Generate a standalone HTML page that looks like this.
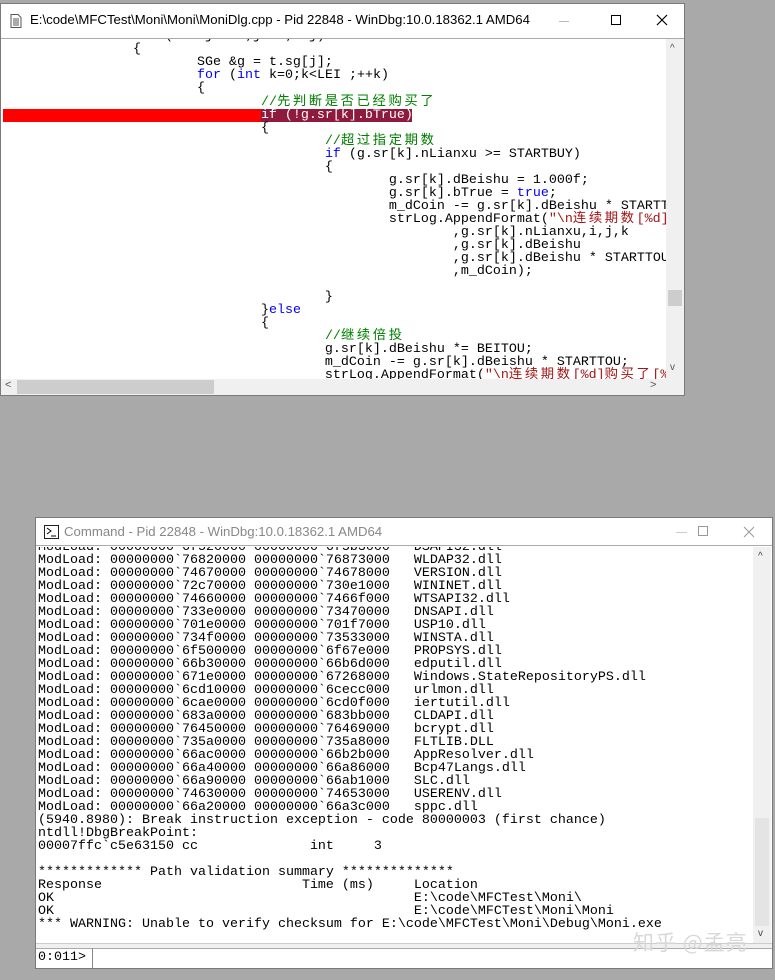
<!DOCTYPE html>
<html><head><meta charset="utf-8"><style>
*{margin:0;padding:0;box-sizing:border-box}
body{width:775px;height:980px;background:#a9a9a9;position:relative;overflow:hidden;font-family:"Liberation Sans",sans-serif}
.win{position:absolute;background:#fff;border:1px solid #7a7a7a}
.tb{position:absolute;left:0;right:0;top:0;height:36px;background:#fff;font-size:13.2px;color:#000;line-height:36px}
.mono{font-family:"Liberation Mono","Noto Sans CJK SC",monospace;font-size:13.33px;line-height:13px;white-space:pre;position:absolute}
.l{position:absolute;left:0;white-space:pre;height:13px}
.b{color:#0000ff}.g{color:#008000}.r{color:#a31515}
.c{letter-spacing:2.6px}
</style></head><body>

<div class="win" style="left:0;top:3px;width:685px;height:393px;">
 <div class="tb" style="height:34px;line-height:32px;">
  <svg style="position:absolute;left:9px;top:10px" width="12" height="14"><path d="M1 .5h7l3 3v10H1z" fill="#fff" stroke="#555"/><path d="M3 5h6M3 7h6M3 9h6M3 11h6" stroke="#555"/></svg>
  <span style="position:absolute;left:29px;">E:\code\MFCTest\Moni\Moni\MoniDlg.cpp - Pid 22848 - WinDbg:10.0.18362.1 AMD64</span>
  <div style="position:absolute;left:558px;top:17px;width:10px;height:1px;background:#bbb"></div>
  <div style="position:absolute;left:610px;top:11px;width:10px;height:10px;border:1px solid #000"></div>
  <svg style="position:absolute;left:655px;top:10px" width="12" height="12"><path d="M1 1l10 10M11 1L1 11" stroke="#000" stroke-width="1.2"/></svg>
 </div>
 <div style="position:absolute;left:0;top:34px;width:683px;height:341px;overflow:hidden;border-top:1px solid #aaa">
  <div style="position:absolute;left:2px;top:70px;width:258px;height:13px;background:#ff0000"></div>
  <div style="position:absolute;left:260px;top:70px;width:151px;height:13px;background:#8e1b3d"></div>
  <div class="mono" style="left:4px;top:-9px;width:662px;height:352px;overflow:hidden">
<div class="l" style="top:0">                <span class="b">for</span> (<span class="b">int</span> j = 0;j&lt;GE;++j)</div>
<div class="l" style="top:13px">                {</div>
<div class="l" style="top:26px">                        SGe &amp;g = t.sg[j];</div>
<div class="l" style="top:39px">                        <span class="b">for</span> (<span class="b">int</span> k=0;k&lt;LEI ;++k)</div>
<div class="l" style="top:52px">                        {</div>
<div class="l" style="top:66px">                                <span class="g">//<span class="c">先判断是否已经购买了</span></span></div>
<div class="l" style="top:79px;color:#fff">                                if (!g.sr[k].bTrue)</div>
<div class="l" style="top:92px">                                {</div>
<div class="l" style="top:105px">                                        <span class="g">//<span class="c">超过指定期数</span></span></div>
<div class="l" style="top:118px">                                        <span class="b">if</span> (g.sr[k].nLianxu &gt;= STARTBUY)</div>
<div class="l" style="top:131px">                                        {</div>
<div class="l" style="top:144px">                                                g.sr[k].dBeishu = 1.000f;</div>
<div class="l" style="top:157px">                                                g.sr[k].bTrue = <span class="b">true</span>;</div>
<div class="l" style="top:170px">                                                m_dCoin -= g.sr[k].dBeishu * STARTTOU;</div>
<div class="l" style="top:183px">                                                strLog.AppendFormat(<span class="r">"\n<span class="c">连续期数</span>[%d]<span class="c">购买了</span>[%d]</span></div>
<div class="l" style="top:196px">                                                        ,g.sr[k].nLianxu,i,j,k</div>
<div class="l" style="top:209px">                                                        ,g.sr[k].dBeishu</div>
<div class="l" style="top:222px">                                                        ,g.sr[k].dBeishu * STARTTOU</div>
<div class="l" style="top:235px">                                                        ,m_dCoin);</div>
<div class="l" style="top:261px">                                        }</div>
<div class="l" style="top:274px">                                }<span class="b">else</span></div>
<div class="l" style="top:287px">                                {</div>
<div class="l" style="top:300px">                                        <span class="g">//<span class="c">继续倍投</span></span></div>
<div class="l" style="top:313px">                                        g.sr[k].dBeishu *= BEITOU;</div>
<div class="l" style="top:326px">                                        m_dCoin -= g.sr[k].dBeishu * STARTTOU;</div>
<div class="l" style="top:339px">                                        strLog.AppendFormat(<span class="r">"\n<span class="c">连续期数</span>[%d]<span class="c">购买了</span>[%d]</span></div>
  </div>
  <div style="position:absolute;left:665px;top:0;width:18px;height:341px;background:#f0f0f0"></div>
  <div style="position:absolute;left:667px;top:251px;width:14px;height:16px;background:#cdcdcd"></div>
  <div style="position:absolute;left:669px;top:4px;font-size:10px;color:#555">^</div>
  <div style="position:absolute;left:669px;top:323px;font-size:10px;color:#555">v</div>
 </div>
 <div style="position:absolute;left:0;top:375px;width:683px;height:16px;background:#f0f0f0">
  <div style="position:absolute;left:16px;top:1px;width:197px;height:14px;background:#cdcdcd"></div>
  <div style="position:absolute;left:4px;top:0;font-size:11px;color:#555">&lt;</div>
  <div style="position:absolute;left:649px;top:0;font-size:11px;color:#555">&gt;</div>
 </div>
</div>

<div class="win" style="left:35px;top:517px;width:738px;height:452px;">
 <div class="tb" style="height:28px;line-height:28px;border-bottom:1px solid #aaa">
  <svg style="position:absolute;left:8px;top:7px" width="15" height="14"><rect x=".5" y=".5" width="14" height="13" fill="#fff" stroke="#222"/><path d="M3 3l4 3-4 3M7 11h5" stroke="#000" fill="none"/></svg>
  <span style="position:absolute;left:28px;color:#888">Command - Pid 22848 - WinDbg:10.0.18362.1 AMD64</span>
  <div style="position:absolute;left:640px;top:14px;width:11px;height:1px;background:#ccc"></div>
  <div style="position:absolute;left:662px;top:8px;width:10px;height:10px;border:1px solid #999"></div>
  <svg style="position:absolute;left:707px;top:8px" width="12" height="12"><path d="M1 1l10 10M11 1L1 11" stroke="#999"/></svg>
 </div>
 <div class="mono" style="left:2px;top:29px;width:715px;height:395px;overflow:hidden">
<div class="l" style="top:-6px">ModLoad: 00000000`6f520000 00000000`6f5b3000   DSAPI32.dll</div>
<div class="l" style="top:7px">ModLoad: 00000000`76820000 00000000`76873000   WLDAP32.dll</div>
<div class="l" style="top:20px">ModLoad: 00000000`74670000 00000000`74678000   VERSION.dll</div>
<div class="l" style="top:33px">ModLoad: 00000000`72c70000 00000000`730e1000   WININET.dll</div>
<div class="l" style="top:46px">ModLoad: 00000000`74660000 00000000`7466f000   WTSAPI32.dll</div>
<div class="l" style="top:59px">ModLoad: 00000000`733e0000 00000000`73470000   DNSAPI.dll</div>
<div class="l" style="top:72px">ModLoad: 00000000`701e0000 00000000`701f7000   USP10.dll</div>
<div class="l" style="top:85px">ModLoad: 00000000`734f0000 00000000`73533000   WINSTA.dll</div>
<div class="l" style="top:98px">ModLoad: 00000000`6f500000 00000000`6f67e000   PROPSYS.dll</div>
<div class="l" style="top:111px">ModLoad: 00000000`66b30000 00000000`66b6d000   edputil.dll</div>
<div class="l" style="top:124px">ModLoad: 00000000`671e0000 00000000`67268000   Windows.StateRepositoryPS.dll</div>
<div class="l" style="top:137px">ModLoad: 00000000`6cd10000 00000000`6cecc000   urlmon.dll</div>
<div class="l" style="top:150px">ModLoad: 00000000`6cae0000 00000000`6cd0f000   iertutil.dll</div>
<div class="l" style="top:163px">ModLoad: 00000000`683a0000 00000000`683bb000   CLDAPI.dll</div>
<div class="l" style="top:176px">ModLoad: 00000000`76450000 00000000`76469000   bcrypt.dll</div>
<div class="l" style="top:189px">ModLoad: 00000000`735a0000 00000000`735a8000   FLTLIB.DLL</div>
<div class="l" style="top:202px">ModLoad: 00000000`66ac0000 00000000`66b2b000   AppResolver.dll</div>
<div class="l" style="top:215px">ModLoad: 00000000`66a40000 00000000`66a86000   Bcp47Langs.dll</div>
<div class="l" style="top:228px">ModLoad: 00000000`66a90000 00000000`66ab1000   SLC.dll</div>
<div class="l" style="top:241px">ModLoad: 00000000`74630000 00000000`74653000   USERENV.dll</div>
<div class="l" style="top:254px">ModLoad: 00000000`66a20000 00000000`66a3c000   sppc.dll</div>
<div class="l" style="top:267px">(5940.8980): Break instruction exception - code 80000003 (first chance)</div>
<div class="l" style="top:280px">ntdll!DbgBreakPoint:</div>
<div class="l" style="top:293px">00007ffc`c5e63150 cc              int     3</div>
<div class="l" style="top:319px">************* Path validation summary **************</div>
<div class="l" style="top:332px">Response                         Time (ms)     Location</div>
<div class="l" style="top:345px">OK                                             E:\code\MFCTest\Moni\</div>
<div class="l" style="top:358px">OK                                             E:\code\MFCTest\Moni\Moni</div>
<div class="l" style="top:371px">*** WARNING: Unable to verify checksum for E:\code\MFCTest\Moni\Debug\Moni.exe</div>
 </div>
 <div style="position:absolute;left:717px;top:29px;width:18px;height:396px;background:#f0f0f0"></div>
 <div style="position:absolute;left:719px;top:300px;width:14px;height:108px;background:#e4e4e4"></div>
 <div style="position:absolute;left:722px;top:33px;font-size:10px;color:#444">^</div>
 <div style="position:absolute;left:722px;top:410px;font-size:10px;color:#444">v</div>
 <div style="position:absolute;left:0;top:425px;width:736px;height:5px;background:#f0f0f0;border-top:1px solid #ccc"></div>
 <div style="position:absolute;left:0;top:430px;width:736px;height:20px;background:#fff;border-top:1px solid #aaa"></div>
 <div class="mono" style="left:2px;top:433px">0:011&gt;</div>
 <div style="position:absolute;left:56px;top:430px;width:1px;height:20px;background:#888"></div>
 <div style="position:absolute;left:597px;top:409px;font-family:'Noto Sans CJK SC',sans-serif;font-size:21px;color:#d8d8d8;letter-spacing:1px">知乎 @孟亮</div>
</div>
</body></html>
